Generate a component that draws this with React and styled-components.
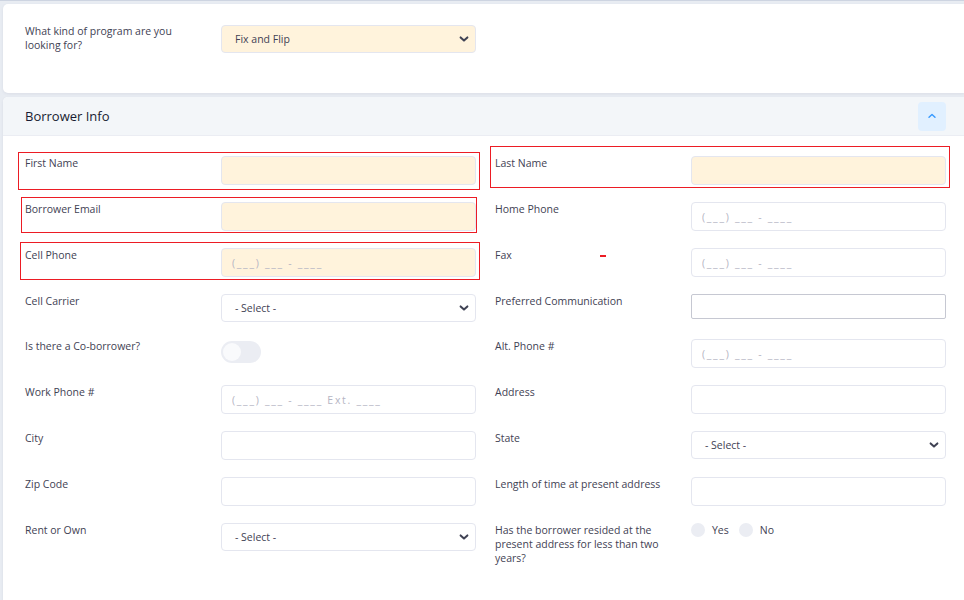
import React from 'react';
import styled, { createGlobalStyle } from 'styled-components';

const GlobalStyle = createGlobalStyle`
  * { box-sizing: border-box; }
  body {
    margin: 0;
    background: #e6eaf1;
    font-family: "Open Sans", "Noto Sans", Arial, sans-serif;
    color: #3f4254;
  }
`;

const Page = styled.div`
  height: 600px;
  overflow: hidden;
  border-top: 1px solid #cdd4e1;
  padding: 3px 0 0 3px;
  background: #e8ecf2;
`;

const Card = styled.div`
  background: #fff;
  border-radius: ${(p) => (p.top ? '5px 0 0 5px' : '5px 0 0 0')};
  box-shadow: 0 1px 3px rgba(60, 70, 100, 0.08);
  margin-bottom: 4px;
`;

const ProgramCard = styled(Card)`
  height: 89px;
  padding: 21px 0 0 22px;
`;

const CardHeader = styled.div`
  height: 39px;
  background: #f3f6f9;
  border-bottom: 1px solid #ebedf3;
  border-radius: 5px 0 0 0;
  display: flex;
  align-items: center;
  justify-content: space-between;
  padding: 0 18px 0 22px;
`;

const Title = styled.h3`
  margin: 0;
  font-size: 13px;
  font-weight: 400;
  color: #181c32;
`;

const CollapseButton = styled.button`
  width: 28px;
  height: 29px;
  border: 0;
  border-radius: 4px;
  background: #e1f0ff;
  display: flex;
  align-items: center;
  justify-content: center;
  padding: 0;
`;

const FormGrid = styled.div`
  display: grid;
  grid-template-columns: 451px 451px;
  column-gap: 19px;
  row-gap: 17px;
  padding: 20px 0 40px 22px;
`;

const Row = styled.div`
  position: relative;
  display: grid;
  grid-template-columns: 196px 255px;
  align-items: start;
`;

const Label = styled.label`
  font-size: 10.5px;
  line-height: 14px;
  padding: 0 18px 0 0;
  margin-top: ${(p) => (p.tight ? '-1px' : '0')};
  color: #3f4254;
`;

const Input = styled.input`
  width: 255px;
  height: ${(p) => (p.short ? '25px' : '29px')};
  border: 1px solid ${(p) => (p.short ? '#c6c8d2' : '#e4e6ef')};
  border-radius: ${(p) => (p.short ? '2px' : '4px')};
  background: ${(p) => (p.required ? '#fff3dc' : '#fff')};
  padding: 0 10px;
  font-family: inherit;
  font-size: 10.5px;
  color: #3f4254;
  outline: none;
  &::placeholder {
    color: #b5b5c3;
    letter-spacing: 1.7px;
  }
`;

const SelectBox = styled.div`
  height: 28px;
  border: 1px solid #e4e6ef;
  border-radius: 4px;
  background: ${(p) => (p.required ? '#fff3dc' : '#fff')};
  display: flex;
  align-items: center;
  justify-content: space-between;
  padding: 0 6px 0 13px;
  font-size: 10.5px;
  color: #3f4254;
`;

const Toggle = styled.div`
  width: 40px;
  height: 22px;
  margin-top: 2px;
  border-radius: 11px;
  background: #ebedf3;
  padding: 2px;
  &::after {
    content: '';
    display: block;
    width: 18px;
    height: 18px;
    border-radius: 50%;
    background: #f9fafc;
  }
`;

const RadioGroup = styled.div`
  display: flex;
  align-items: center;
  font-size: 10.5px;
  height: 14px;
`;

const RadioOption = styled.span`
  display: flex;
  align-items: center;
  gap: 7px;
  margin-right: ${(p) => (p.gap ? '10px' : '0')};
  &::before {
    content: '';
    width: 14px;
    height: 14px;
    border-radius: 50%;
    background: #ebedf3;
  }
`;

const Highlight = styled.div`
  position: absolute;
  top: ${(p) => p.t}px;
  left: ${(p) => p.l}px;
  right: ${(p) => p.r}px;
  bottom: ${(p) => p.b}px;
  border: 1px solid #ec1c24;
  pointer-events: none;
`;

const Tick = styled.span`
  position: absolute;
  top: 7px;
  left: 105px;
  width: 6px;
  height: 2px;
  background: #ec1c24;
`;

const Chevron = ({ up }) => (
  <svg width="10" height="10" viewBox="0 0 10 10">
    {up ? (
      <path d="M2 6.2 L5 3.4 L8 6.2" fill="none" stroke="#3699ff" strokeWidth="1.4" strokeLinecap="round" strokeLinejoin="round" />
    ) : (
      <path d="M1.6 3.4 L5 6.6 L8.4 3.4" fill="none" stroke="#3f4254" strokeWidth="2" strokeLinecap="round" strokeLinejoin="round" />
    )}
  </svg>
);

const Select = ({ value, required }) => (
  <SelectBox required={required}>
    <span>{value}</span>
    <Chevron />
  </SelectBox>
);

const PHONE = '(___) ___ - ____';

const App = () => {
  return (
    <>
      <GlobalStyle />
      <Page>
        <ProgramCard top>
          <Row>
            <Label tight>What kind of program are you looking for?</Label>
            <Select value="Fix and Flip" required />
          </Row>
        </ProgramCard>

        <Card>
          <CardHeader>
            <Title>Borrower Info</Title>
            <CollapseButton>
              <Chevron up />
            </CollapseButton>
          </CardHeader>
          <FormGrid>
            <Row>
              <Label>First Name</Label>
              <Input required />
              <Highlight t={-4} l={-7} r={-4} b={-5} />
            </Row>
            <Row>
              <Label>Last Name</Label>
              <Input required />
              <Highlight t={-10} l={-5} r={-4} b={-3} />
            </Row>
            <Row>
              <Label>Borrower Email</Label>
              <Input required />
              <Highlight t={-5} l={-4} r={-1} b={-2} />
            </Row>
            <Row>
              <Label>Home Phone</Label>
              <Input placeholder={PHONE} />
            </Row>
            <Row>
              <Label>Cell Phone</Label>
              <Input required placeholder={PHONE} />
              <Highlight t={-6} l={-5} r={-4} b={-3} />
            </Row>
            <Row>
              <Label>Fax</Label>
              <Input placeholder={PHONE} />
              <Tick />
            </Row>
            <Row>
              <Label>Cell Carrier</Label>
              <Select value="- Select -" />
            </Row>
            <Row>
              <Label>Preferred Communication</Label>
              <Input short />
            </Row>
            <Row>
              <Label>Is there a Co-borrower?</Label>
              <Toggle />
            </Row>
            <Row>
              <Label>Alt. Phone #</Label>
              <Input placeholder={PHONE} />
            </Row>
            <Row>
              <Label>Work Phone #</Label>
              <Input placeholder={PHONE + ' Ext. ____'} />
            </Row>
            <Row>
              <Label>Address</Label>
              <Input />
            </Row>
            <Row>
              <Label>City</Label>
              <Input />
            </Row>
            <Row>
              <Label>State</Label>
              <Select value="- Select -" />
            </Row>
            <Row>
              <Label>Zip Code</Label>
              <Input />
            </Row>
            <Row>
              <Label>Length of time at present address</Label>
              <Input />
            </Row>
            <Row>
              <Label>Rent or Own</Label>
              <Select value="- Select -" />
            </Row>
            <Row>
              <Label>Has the borrower resided at the present address for less than two years?</Label>
              <RadioGroup>
                <RadioOption gap>Yes</RadioOption>
                <RadioOption>No</RadioOption>
              </RadioGroup>
            </Row>
          </FormGrid>
        </Card>
      </Page>
    </>
  );
};

export default App;
